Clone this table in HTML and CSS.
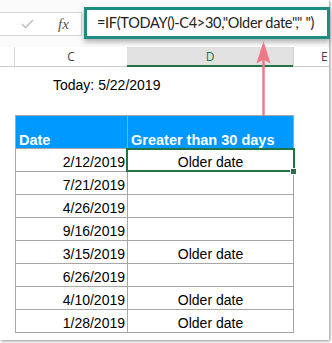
FILE: index.html
```html
<!DOCTYPE html>
<html>
<head>
<meta charset="utf-8">
<link rel="stylesheet" href="styles.css">
</head>
<body>
<div class="page">
  <div class="sheet">
    <div class="fbar">
      <div class="fbox">
        <svg class="check" width="13" height="10" viewBox="0 0 13 10"><polyline points="1,5 4.5,8.5 12,1" fill="none" stroke="#c3c3c3" stroke-width="1.6"/></svg>
        <span class="fx">fx</span>
      </div>
    </div>
    <div class="colheads">
      <div class="rh"></div>
      <div class="ch c">C</div>
      <div class="ch d">D</div>
      <div class="ch e">E</div>
    </div>
    <div class="content">
      <div class="today">Today: 5/22/2019</div>
      <div class="grid">
        <div class="hd">Date</div>
        <div class="hd">Greater than 30 days</div>
        <div class="dt">2/12/2019</div><div class="rs sel">Older date<span class="handle"></span></div>
        <div class="dt">7/21/2019</div><div class="rs"></div>
        <div class="dt">4/26/2019</div><div class="rs"></div>
        <div class="dt">9/16/2019</div><div class="rs"></div>
        <div class="dt">3/15/2019</div><div class="rs">Older date</div>
        <div class="dt">6/26/2019</div><div class="rs"></div>
        <div class="dt">4/10/2019</div><div class="rs">Older date</div>
        <div class="dt">1/28/2019</div><div class="rs">Older date</div>
      </div>
    </div>
  </div>
  <div class="formula">=IF(TODAY()-C4&gt;30,"Older date"," ")</div>
  <svg class="arrow" width="20" height="80" viewBox="0 0 20 80">
    <line x1="9.5" y1="18" x2="9.5" y2="78" stroke="#ee7788" stroke-width="2.4"/>
    <polygon points="9.5,3 16.5,25.5 9.5,21.5 2.5,25.5" fill="#ee7788"/>
  </svg>
</div>
</body>
</html>
```

FILE: styles.css
```css
html, body {
  margin: 0;
  padding: 0;
  background: #ffffff;
}
body {
  font-family: "Liberation Sans", Arial, sans-serif;
  color: #000;
}
.page {
  position: relative;
  width: 332px;
  height: 343px;
  overflow: hidden;
  background: #ffffff;
}
.sheet {
  width: 329px;
  height: 340px;
  background: #ffffff;
  box-shadow: 1px 1px 3px rgba(0, 0, 0, 0.45);
}
.fbar {
  height: 47px;
  box-sizing: border-box;
  padding-top: 12px;
  display: flex;
  align-items: flex-start;
  background: #fbfbfb;
}
.fbox {
  width: 82px;
  height: 24px;
  box-sizing: border-box;
  border: 1px solid #d4d4d4;
  border-left: none;
  background: #ffffff;
  display: flex;
  align-items: center;
}
.check {
  margin-left: 21px;
  display: block;
}
.fx {
  margin-left: 24px;
  font-family: "Liberation Serif", "Times New Roman", serif;
  font-style: italic;
  font-size: 15px;
  color: #555;
  line-height: 16px;
}
.colheads {
  display: flex;
  height: 20px;
  background: #ffffff;
}
.rh {
  width: 15px;
  box-sizing: border-box;
  border-right: 1px solid #d8d8d8;
  box-shadow: inset 0 -1px 0 #c8c8c8;
}
.ch {
  font-family: "Open Sans", "Liberation Sans", sans-serif;
  font-size: 12px;
  line-height: 19px;
  color: #444;
  text-align: center;
  box-shadow: inset 0 -1px 0 #c8c8c8;
}
.c {
  width: 112px;
}
.d {
  width: 166px;
  background: #e1e1e1;
  color: #217346;
  box-shadow: inset 0 -2px 0 #217346;
}
.e {
  flex: 1;
  text-align: left;
  padding-left: 27px;
  border-left: 1px solid #d0d0d0;
}
.content {
  font-size: 14px;
}
.today {
  height: 48px;
  box-sizing: border-box;
  padding-top: 10px;
  padding-left: 53px;
  line-height: 16px;
}
.grid {
  margin-left: 15px;
  display: grid;
  grid-template-columns: 111px 165px;
  grid-template-rows: 32px repeat(8, 22px);
  gap: 1px;
  width: fit-content;
  background: #a6a6a6;
  border: 1px solid #a6a6a6;
}
.grid > div {
  background: #ffffff;
  line-height: 16px;
  display: flex;
  align-items: flex-end;
  padding-bottom: 1px;
  box-sizing: border-box;
}
.grid > .hd {
  background: #0099ff;
  color: #ffffff;
  font-weight: bold;
  font-size: 14.5px;
  padding-left: 3px;
  padding-bottom: 0;
}
.grid > .dt {
  justify-content: flex-end;
  padding-right: 2px;
}
.grid > .rs {
  justify-content: center;
}
.grid > .sel {
  position: relative;
}
.sel::after {
  content: "";
  position: absolute;
  left: -2px;
  top: -1px;
  right: -2px;
  bottom: -1px;
  border: 2px solid #217346;
}
.handle {
  position: absolute;
  right: -4px;
  bottom: -4px;
  width: 5px;
  height: 5px;
  background: #217346;
  border: 1px solid #ffffff;
  z-index: 2;
}
.formula {
  position: absolute;
  left: 84px;
  top: 7px;
  width: 246px;
  height: 32px;
  box-sizing: border-box;
  border: 3px solid #1e8c7e;
  background: #ffffff;
  box-shadow: 0 3px 5px rgba(0, 0, 0, 0.3);
  padding-left: 10px;
  font-family: "Lato", "Liberation Sans", sans-serif;
  font-size: 14.5px;
  letter-spacing: -0.3px;
  line-height: 26px;
  color: #222;
  white-space: nowrap;
}
.arrow {
  position: absolute;
  left: 254px;
  top: 38px;
}
```
